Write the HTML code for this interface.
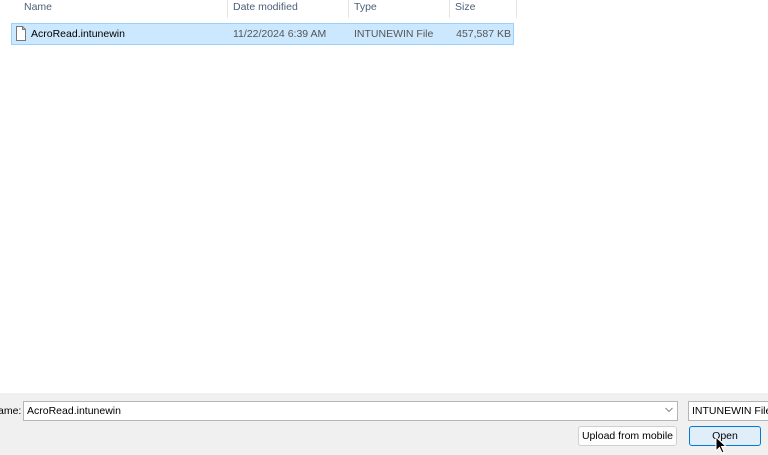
<!DOCTYPE html>
<html><head><style>
body{margin:0;width:768px;height:455px;background:#fff;position:relative;overflow:hidden;font-family:"Liberation Sans",sans-serif;font-size:10.5px;color:#000}
.a{position:absolute;white-space:nowrap}
.h{top:1px;color:#4c607a}
.sep{top:0;width:1px;height:18px;background:#e5e5e5}
</style></head><body>
<div class="a h" style="left:24px">Name</div>
<div class="a sep" style="left:227px"></div>
<div class="a h" style="left:233px">Date modified</div>
<div class="a sep" style="left:348px"></div>
<div class="a h" style="left:354px">Type</div>
<div class="a sep" style="left:449px"></div>
<div class="a h" style="left:455px">Size</div>
<div class="a sep" style="left:516px"></div>
<div class="a" style="left:11px;top:23px;width:501px;height:20px;background:#cce8ff;border:1px solid #99d1ff"></div>
<svg class="a" style="left:15px;top:26px" width="12" height="15"><path d="M1.5 .5H7.5L10.5 3.5V14.5H1.5Z M7.5 .5V3.5H10.5" fill="#fff" stroke="#777"/></svg>
<div class="a" style="left:31px;top:28px">AcroRead.intunewin</div>
<div class="a" style="left:233px;top:28px;color:#555">11/22/2024 6:39 AM</div>
<div class="a" style="left:354px;top:28px;color:#555">INTUNEWIN File</div>
<div class="a" style="left:450px;top:28px;width:61px;text-align:right;color:#555">457,587 KB</div>
<div class="a" style="left:0;top:393px;width:768px;height:62px;background:#f0f0f0"></div>
<div class="a" style="left:-2px;top:405px">ame:</div>
<div class="a" style="left:23px;top:401px;width:653px;height:18px;background:#fff;border:1px solid #b5b5b5"></div>
<div class="a" style="left:27px;top:405px">AcroRead.intunewin</div>
<svg class="a" style="left:665px;top:407px" width="8" height="6"><path d="M.5 1L4 4.5L7.5 1" fill="none" stroke="#888"/></svg>
<div class="a" style="left:688px;top:401px;width:90px;height:18px;background:#fff;border:1px solid #b5b5b5"></div>
<div class="a" style="left:692px;top:405px">INTUNEWIN File (</div>
<div class="a" style="left:578px;top:426px;width:97px;height:18px;background:#fdfdfd;border:1px solid #d0d0d0;border-radius:3px;text-align:center;line-height:18px">Upload from mobile</div>
<div class="a" style="left:689px;top:426px;width:70px;height:18px;background:#e0eef9;border:1px solid #0078d4;border-radius:3px;text-align:center;line-height:18px">Open</div>
<svg class="a" style="left:715px;top:436px" width="12" height="18"><path d="M1 1V15L4.5 11.5L7 17L9 16L6.5 10.5H11Z" fill="#000" stroke="#fff" stroke-width="1"/></svg>
</body></html>
